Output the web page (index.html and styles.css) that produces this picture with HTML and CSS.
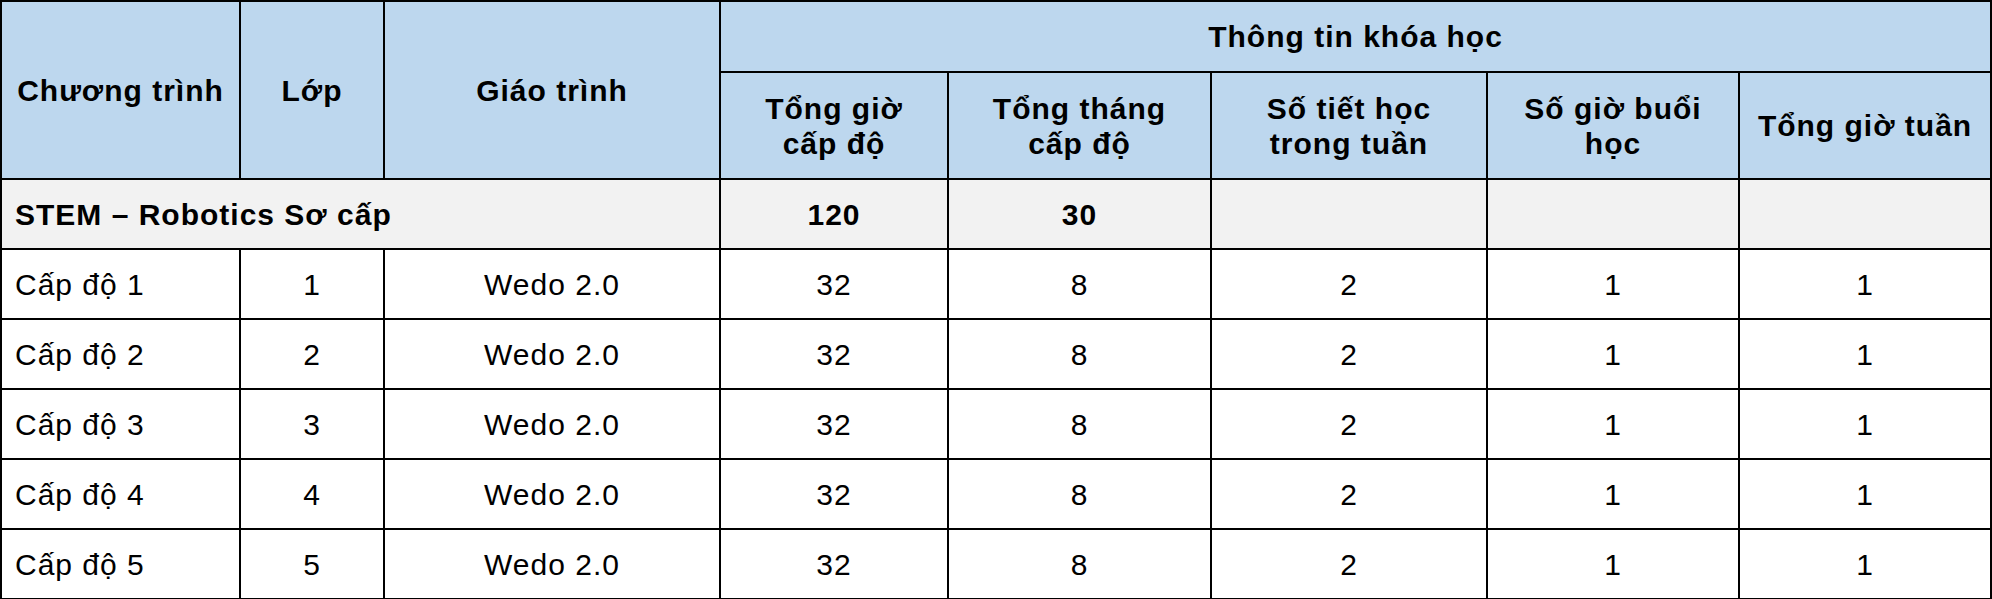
FILE: index.html
```html
<!DOCTYPE html>
<html lang="vi">
<head>
<meta charset="utf-8">
<title>Thông tin khóa học</title>
<link rel="stylesheet" href="styles.css">
</head>
<body>
<table class="course-table">
  <colgroup>
    <col class="c-prog">
    <col class="c-grade">
    <col class="c-book">
    <col class="c-hours">
    <col class="c-months">
    <col class="c-lessons">
    <col class="c-session">
    <col class="c-week">
  </colgroup>
  <thead>
    <tr class="head-top">
      <th rowspan="2">Chương trình</th>
      <th rowspan="2">Lớp</th>
      <th rowspan="2">Giáo trình</th>
      <th colspan="5">Thông tin khóa học</th>
    </tr>
    <tr class="head-sub">
      <th>Tổng giờ<br>cấp độ</th>
      <th>Tổng tháng<br>cấp độ</th>
      <th>Số tiết học<br>trong tuần</th>
      <th>Số giờ buổi<br>học</th>
      <th>Tổng giờ tuần</th>
    </tr>
  </thead>
  <tbody>
    <tr class="group-row">
      <td colspan="3" class="left">STEM – Robotics Sơ cấp</td>
      <td>120</td>
      <td>30</td>
      <td></td>
      <td></td>
      <td></td>
    </tr>
    <tr>
      <td class="left">Cấp độ 1</td><td>1</td><td>Wedo 2.0</td><td>32</td><td>8</td><td>2</td><td>1</td><td>1</td>
    </tr>
    <tr>
      <td class="left">Cấp độ 2</td><td>2</td><td>Wedo 2.0</td><td>32</td><td>8</td><td>2</td><td>1</td><td>1</td>
    </tr>
    <tr>
      <td class="left">Cấp độ 3</td><td>3</td><td>Wedo 2.0</td><td>32</td><td>8</td><td>2</td><td>1</td><td>1</td>
    </tr>
    <tr>
      <td class="left">Cấp độ 4</td><td>4</td><td>Wedo 2.0</td><td>32</td><td>8</td><td>2</td><td>1</td><td>1</td>
    </tr>
    <tr>
      <td class="left">Cấp độ 5</td><td>5</td><td>Wedo 2.0</td><td>32</td><td>8</td><td>2</td><td>1</td><td>1</td>
    </tr>
  </tbody>
</table>
</body>
</html>
```

FILE: styles.css
```css
html, body {
  margin: 0;
  padding: 0;
  background: #ffffff;
}

.course-table {
  border-collapse: collapse;
  table-layout: fixed;
  width: 1991px;
  font-family: "Liberation Sans", Arial, sans-serif;
  font-size: 30px;
  letter-spacing: 1px;
  color: #000000;
}

.c-prog { width: 239px; }
.c-grade { width: 144px; }
.c-book { width: 336px; }
.c-hours { width: 228px; }
.c-months { width: 263px; }
.c-lessons { width: 276px; }
.c-session { width: 252px; }
.c-week { width: 252px; }

.course-table th,
.course-table td {
  border: 2px solid #000000;
  padding: 0 8px;
  text-align: center;
  vertical-align: middle;
  line-height: 35px;
}

.course-table th {
  background: #bdd7ee;
  font-weight: bold;
}

.head-top { height: 71px; }
.head-sub { height: 107px; }

.course-table tbody tr { height: 70px; }

.group-row td {
  background: #f2f2f2;
  font-weight: bold;
}

.course-table td.left {
  text-align: left;
  padding-left: 13px;
}
```
